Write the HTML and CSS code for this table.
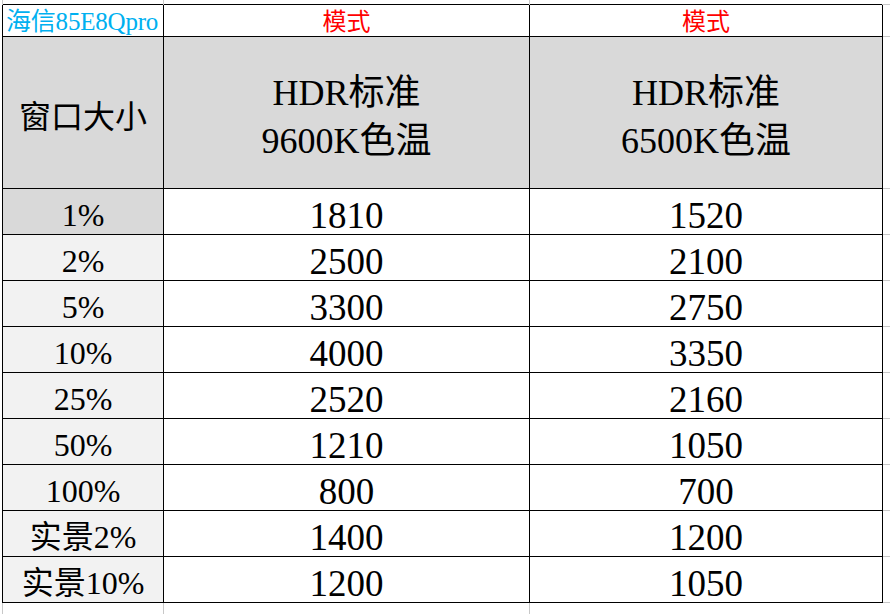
FILE: index.html
```html
<!DOCTYPE html>
<html lang="zh">
<head>
<meta charset="utf-8">
<title>海信85E8Qpro</title>
<link rel="stylesheet" href="styles.css">
</head>
<body>
<table class="sheet">
  <colgroup>
    <col class="c1"><col class="c2"><col class="c3"><col class="c4">
  </colgroup>
  <tr class="top-gap">
    <td class="g"></td><td class="g"></td><td class="g"></td><td class="g gr"></td>
  </tr>
  <tr class="r-title">
    <td class="model">海信85E8Qpro</td>
    <td class="mode">模式</td>
    <td class="mode">模式</td>
    <td class="g gr"></td>
  </tr>
  <tr class="r-head">
    <td class="head side-head">窗口大小</td>
    <td class="head">HDR标准<br>9600K色温</td>
    <td class="head">HDR标准<br>6500K色温</td>
    <td class="g gr"></td>
  </tr>
  <tr class="r-data"><td class="side first">1%</td><td class="num">1810</td><td class="num">1520</td><td class="g gr"></td></tr>
  <tr class="r-data"><td class="side">2%</td><td class="num">2500</td><td class="num">2100</td><td class="g gr"></td></tr>
  <tr class="r-data"><td class="side">5%</td><td class="num">3300</td><td class="num">2750</td><td class="g gr"></td></tr>
  <tr class="r-data"><td class="side">10%</td><td class="num">4000</td><td class="num">3350</td><td class="g gr"></td></tr>
  <tr class="r-data"><td class="side">25%</td><td class="num">2520</td><td class="num">2160</td><td class="g gr"></td></tr>
  <tr class="r-data"><td class="side">50%</td><td class="num">1210</td><td class="num">1050</td><td class="g gr"></td></tr>
  <tr class="r-data"><td class="side">100%</td><td class="num">800</td><td class="num">700</td><td class="g gr"></td></tr>
  <tr class="r-data"><td class="side">实景2%</td><td class="num">1400</td><td class="num">1200</td><td class="g gr"></td></tr>
  <tr class="r-data"><td class="side">实景10%</td><td class="num">1200</td><td class="num">1050</td><td class="g gr"></td></tr>
  <tr class="bottom-gap">
    <td class="g"></td><td class="g"></td><td class="g"></td><td class="g gr"></td>
  </tr>
</table>
</body>
</html>
```

FILE: styles.css
```css
html, body {
  margin: 0;
  padding: 0;
  background: #ffffff;
  overflow: hidden;
}

body {
  font-family: "Liberation Serif", "Noto Sans CJK SC", serif;
  color: #000000;
}

.sheet {
  border-collapse: collapse;
  table-layout: fixed;
  margin-left: 2px;
  width: 888px;
}

.c1 { width: 161px; }
.c2 { width: 366px; }
.c3 { width: 353px; }
.c4 { width: 8px; }

.sheet td {
  border: 1px solid #000000;
  padding: 0;
  text-align: center;
  white-space: nowrap;
  overflow: visible;
}

.sheet td.g {
  border: none;
  border-left: 1px solid #c8c8c8;
}

.sheet td.gr {
  border-left: none;
  border-bottom: 1px solid #c8c8c8;
}

.top-gap td { height: 4px; }
.top-gap td.gr { border-bottom: 1px solid #c8c8c8; }
.bottom-gap td { height: 11px; }
.bottom-gap td.gr { border-bottom: none; }

.r-title td { height: 31px; vertical-align: bottom; }
.r-title td.model,
.r-title td.mode { height: 29px; padding-bottom: 2px; }

.r-head td { height: 151px; }
.r-head td.head { height: 143px; padding-top: 8px; }

.r-data td { height: 45px; vertical-align: bottom; }
.r-data td.side { height: 42px; padding-bottom: 3px; }

.sheet td.model {
  color: #00b0f0;
  font-size: 25px;
  line-height: 25px;
  text-align: left;
  padding-left: 3px;
  letter-spacing: -0.2px;
  overflow: hidden;
}

.mode {
  color: #ff0000;
  font-size: 24px;
  line-height: 24px;
}

.head {
  background: #d9d9d9;
  font-size: 36px;
  line-height: 48px;
  vertical-align: middle;
}

.side-head {
  font-size: 32px;
}

.side {
  background: #f2f2f2;
  font-size: 32px;
  line-height: 32px;
}

.side.first {
  background: #d9d9d9;
}

.num {
  font-size: 37px;
  line-height: 37px;
}
```
